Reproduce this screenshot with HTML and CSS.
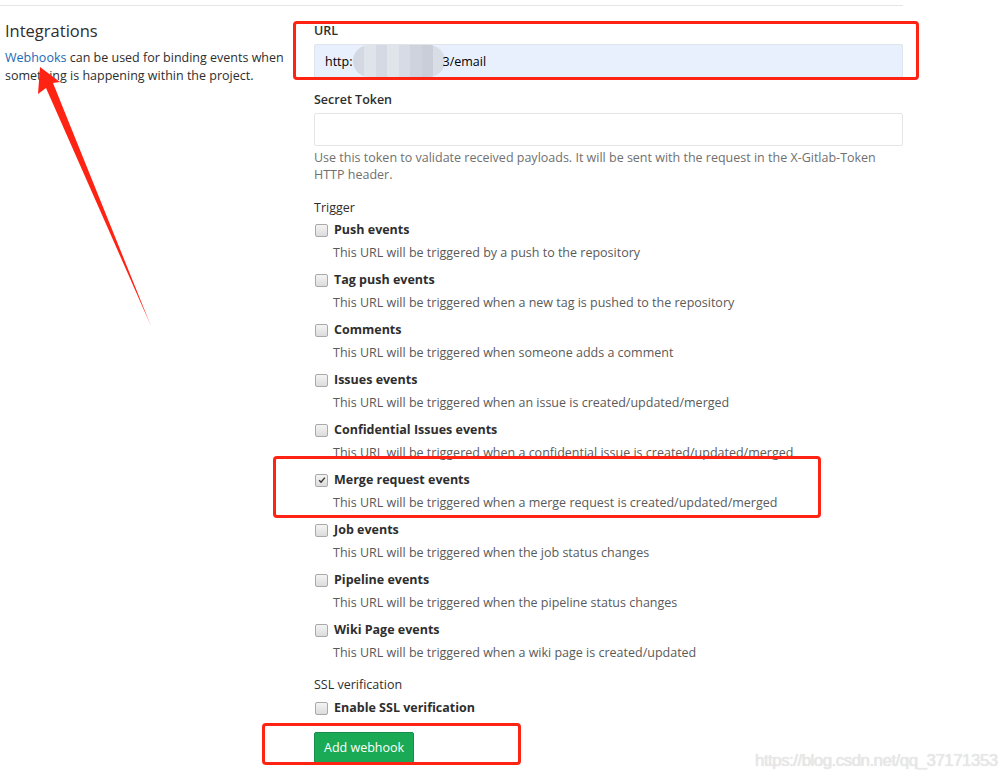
FILE: index.html
```html
<!DOCTYPE html>
<html>
<head>
<meta charset="utf-8">
<link rel="stylesheet" href="styles.css">
</head>
<body>
<div class="page">
  <div class="row">
    <div class="side">
      <h4 class="side-title">Integrations</h4>
      <p class="side-text"><a class="link" href="#">Webhooks</a> can be used for binding events when something is happening within the project.</p>
    </div>
    <form class="main">
      <div class="group">
        <label class="label">URL</label>
        <div class="input filled">http:<span class="blur"><i></i><i></i><i></i><i></i><i></i><i></i><i></i><i></i></span>3/email</div>
      </div>
      <div class="group">
        <label class="label">Secret Token</label>
        <div class="input"></div>
        <p class="help">Use this token to validate received payloads. It will be sent with the request in the X-Gitlab-Token HTTP header.</p>
      </div>
      <div class="group trigger">
        <div class="label plain">Trigger</div>
        <ul class="events">
          <li class="event"><div class="check-row"><span class="cb"></span><b>Push events</b></div><p class="desc">This URL will be triggered by a push to the repository</p></li>
          <li class="event"><div class="check-row"><span class="cb"></span><b>Tag push events</b></div><p class="desc">This URL will be triggered when a new tag is pushed to the repository</p></li>
          <li class="event"><div class="check-row"><span class="cb"></span><b>Comments</b></div><p class="desc">This URL will be triggered when someone adds a comment</p></li>
          <li class="event"><div class="check-row"><span class="cb"></span><b>Issues events</b></div><p class="desc">This URL will be triggered when an issue is created/updated/merged</p></li>
          <li class="event"><div class="check-row"><span class="cb"></span><b>Confidential Issues events</b></div><p class="desc">This URL will be triggered when a confidential issue is created/updated/merged</p></li>
          <li class="event"><div class="check-row"><span class="cb checked"><svg viewBox="0 0 12 12" width="12" height="12"><path d="M2.6 6.2 L4.9 8.6 L9.4 3.2" fill="none" stroke="#333" stroke-width="1.7"/></svg></span><b>Merge request events</b></div><p class="desc">This URL will be triggered when a merge request is created/updated/merged</p></li>
          <li class="event"><div class="check-row"><span class="cb"></span><b>Job events</b></div><p class="desc">This URL will be triggered when the job status changes</p></li>
          <li class="event"><div class="check-row"><span class="cb"></span><b>Pipeline events</b></div><p class="desc">This URL will be triggered when the pipeline status changes</p></li>
          <li class="event"><div class="check-row"><span class="cb"></span><b>Wiki Page events</b></div><p class="desc">This URL will be triggered when a wiki page is created/updated</p></li>
        </ul>
      </div>
      <div class="group ssl">
        <div class="label plain">SSL verification</div>
        <div class="check-row"><span class="cb"></span><b>Enable SSL verification</b></div>
      </div>
      <div class="actions">
        <button type="button" class="btn">Add webhook</button>
      </div>
    </form>
  </div>

  <div class="mark mark-url"></div>
  <div class="mark mark-merge"></div>
  <div class="mark mark-btn"></div>
  <svg class="arrow" width="200" height="340" viewBox="0 0 200 340">
    <polygon points="40,67 60,82 53,83 151,326 46,88 38,94" fill="#ff2314"/>
  </svg>
  <div class="watermark">https://blog.csdn.net/qq_37171353</div>
</div>
</body>
</html>
```
FILE: styles.css
```css
html, body {
  margin: 0;
  padding: 0;
  background: #fff;
}
body {
  font-family: "Open Sans", "Noto Sans", "Liberation Sans", sans-serif;
  font-size: 12.5px;
  color: #2e2e2e;
}
.page {
  position: relative;
  width: 1007px;
  height: 781px;
  overflow: hidden;
}
.row {
  display: flex;
  margin-top: 5px;
  width: 903px;
  border-top: 1px solid #e5e5e5;
}
.side {
  width: 314px;
  padding-left: 5px;
  padding-right: 20px;
  box-sizing: border-box;
}
.side-title {
  margin: 14px 0 0;
  font-size: 16.5px;
  font-weight: 400;
  line-height: 22px;
  color: #2e2e2e;
}
.side-text {
  margin: 7px 0 0;
  line-height: 18px;
  color: #2e2e2e;
}
.link {
  color: #1b69b6;
  text-decoration: none;
}
.main {
  flex: 1;
  margin: 0;
  padding-top: 16px;
}
.group {
  display: flex;
  flex-direction: column;
}
.label {
  font-weight: 600;
  line-height: 18px;
  margin-bottom: 4px;
}
.label.plain {
  font-weight: 400;
}
.input {
  position: relative;
  height: 33px;
  box-sizing: border-box;
  border: 1px solid #e5e5e5;
  border-radius: 2px;
  padding: 0 10px;
  line-height: 31px;
  color: #000;
  display: flex;
  align-items: center;
}
.input.filled {
  background: #e8f0fe;
  border-color: #dfe3ea;
  margin-bottom: 13px;
  height: 34px;
}
.blur {
  display: inline-flex;
  width: 92px;
  height: 32px;
  border-radius: 16px;
  overflow: hidden;
  margin: 0 -2px 0 0;
  align-self: center;
}
.blur i {
  flex: 1;
  background: #d3d8e2;
}
.blur i:nth-child(2) { background: #dfe3ea; }
.blur i:nth-child(3) { background: #d4d9e3; }
.blur i:nth-child(4) { background: #e0e4eb; }
.blur i:nth-child(5) { background: #d6dbe5; }
.blur i:nth-child(6) { background: #ced3dd; }
.blur i:nth-child(7) { background: #c9ced8; }
.blur i:nth-child(8) { background: #d9dde6; }
.help {
  margin: 3px 0 0;
  line-height: 17px;
  color: #707070;
  padding-right: 20px;
}
.trigger {
  margin-top: 16px;
}
.trigger .label {
  margin-bottom: 4px;
}
.events {
  list-style: none;
  margin: 0;
  padding: 0;
}
.event {
  height: 50px;
}
.check-row {
  display: flex;
  align-items: center;
  height: 18px;
  line-height: 18px;
}
.check-row b {
  font-weight: 700;
  color: #2e2e2e;
}
.cb {
  width: 11px;
  height: 11px;
  border: 1px solid #a9a9a9;
  border-radius: 2px;
  background: linear-gradient(#f4f4f4, #dcdcdc);
  margin: 0 6px 0 1px;
  display: flex;
  align-items: center;
  justify-content: center;
  flex: none;
}
.cb svg {
  width: 10px;
  height: 10px;
}
.desc {
  margin: 5px 0 0 19px;
  line-height: 18px;
  color: #5a5a5a;
}
.ssl {
  margin-top: 5px;
}
.ssl .label {
  margin-bottom: 5px;
}
.actions {
  margin-top: 15px;
}
.btn {
  font-family: inherit;
  font-size: 12.5px;
  color: #fff;
  background: #1aaa55;
  border: 1px solid #168f48;
  border-radius: 2px;
  height: 31px;
  padding: 0 9px;
  line-height: 29px;
}
.mark {
  position: absolute;
  border: 3px solid #ff2314;
  border-radius: 4px;
  box-sizing: border-box;
}
.mark-url {
  left: 293px;
  top: 21px;
  width: 626px;
  height: 59px;
}
.mark-merge {
  left: 273px;
  top: 456px;
  width: 548px;
  height: 62px;
}
.mark-btn {
  left: 262px;
  top: 723px;
  width: 259px;
  height: 42px;
}
.arrow {
  position: absolute;
  left: 0;
  top: 0;
}
.watermark {
  position: absolute;
  left: 755px;
  top: 751px;
  font-family: "Liberation Sans", Arial, sans-serif;
  font-size: 17px;
  color: #e8e8e8;
  text-shadow: 0 0 1px #d4d4d4;
  letter-spacing: -0.55px;
}
```
